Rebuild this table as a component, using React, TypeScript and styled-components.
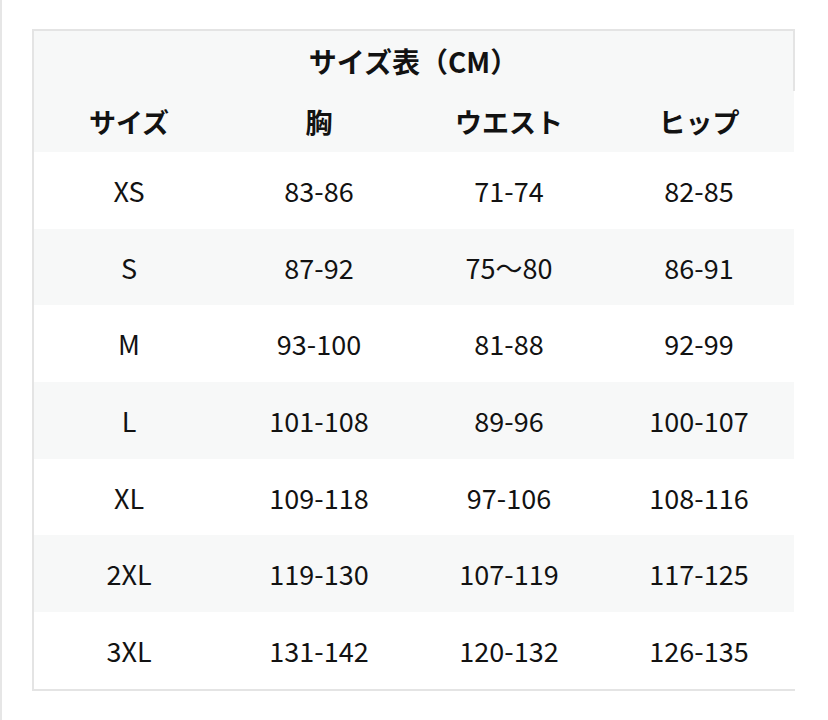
import styled, { createGlobalStyle } from "styled-components";

const GlobalStyle = createGlobalStyle`
  html, body {
    margin: 0;
    padding: 0;
    background: #ffffff;
  }
  body {
    font-family: "Noto Sans CJK JP", "Noto Sans", sans-serif;
    color: #121212;
  }
`;

const Page = styled.div`
  min-height: 720px;
  box-sizing: border-box;
  border-left: 2px solid #e6e6e6;
  padding: 29px 0 0 30px;
`;

const Box = styled.div`
  width: 763px;
  box-sizing: border-box;
  border-left: 2px solid #e4e4e4;
  border-top: 2px solid #e4e4e4;
  border-bottom: 2px solid #e4e4e4;
`;

const Table = styled.table`
  width: 100%;
  border-collapse: collapse;
  table-layout: fixed;
`;

const TitleCell = styled.th`
  height: 60px;
  padding: 0;
  background: #f7f8f8;
  border-right: 2px solid #e4e4e4;
  font-size: 28px;
  font-weight: 700;
  text-align: center;
  vertical-align: middle;
`;

const HeadCell = styled.th`
  height: 61px;
  padding: 0;
  background: #f7f8f8;
  font-size: 27px;
  font-weight: 700;
  text-align: center;
  vertical-align: middle;
`;

const Row = styled.tr<{ $shaded: boolean }>`
  background: ${p => (p.$shaded ? "#f7f8f8" : "#ffffff")};
`;

const Cell = styled.td`
  height: 76.7px;
  padding: 0;
  font-size: 27px;
  font-weight: 400;
  text-align: center;
  vertical-align: middle;
`;

const headers = ["サイズ", "胸", "ウエスト", "ヒップ"];

const rows = [
  ["XS", "83-86", "71-74", "82-85"],
  ["S", "87-92", "75〜80", "86-91"],
  ["M", "93-100", "81-88", "92-99"],
  ["L", "101-108", "89-96", "100-107"],
  ["XL", "109-118", "97-106", "108-116"],
  ["2XL", "119-130", "107-119", "117-125"],
  ["3XL", "131-142", "120-132", "126-135"],
];

const App = () => {
  return (
    <Page>
      <GlobalStyle />
      <Box>
        <Table>
          <thead>
            <tr>
              <TitleCell colSpan={4}>サイズ表（CM）</TitleCell>
            </tr>
            <tr>
              {headers.map(h => (
                <HeadCell key={h}>{h}</HeadCell>
              ))}
            </tr>
          </thead>
          <tbody>
            {rows.map((r, i) => (
              <Row key={r[0]} $shaded={i % 2 === 1}>
                {r.map((c, j) => (
                  <Cell key={j}>{c}</Cell>
                ))}
              </Row>
            ))}
          </tbody>
        </Table>
      </Box>
    </Page>
  );
};

export default App;
